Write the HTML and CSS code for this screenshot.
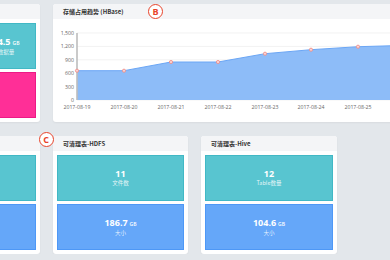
FILE: index.html
```html
<!DOCTYPE html>
<html lang="zh">
<head>
<meta charset="utf-8">
<title>存储概览</title>
<link rel="stylesheet" href="styles.css">
</head>
<body>
<div class="page">
  <div class="row top-row">
    <section class="card side-card">
      <header class="card-head"></header>
      <div class="card-body">
        <div class="tile teal"><div class="num">34.5<span class="unit">GB</span></div><div class="lbl">数据量</div></div>
        <div class="tile pink"></div>
      </div>
    </section>
    <section class="card chart-card">
      <header class="card-head">存储占用趋势 (HBase)</header>
      <div class="chart">
        <svg width="520" height="103" viewBox="0 0 520 103">
          <g class="grid">
            <line x1="24" y1="14" x2="520" y2="14"/>
            <line x1="24" y1="27.4" x2="520" y2="27.4"/>
            <line x1="24" y1="40.8" x2="520" y2="40.8"/>
            <line x1="24" y1="54.2" x2="520" y2="54.2"/>
            <line x1="24" y1="67.6" x2="520" y2="67.6"/>
            <line x1="24" y1="81" x2="520" y2="81"/>
          </g>
          <polygon class="area" points="24,51.7 71,51.7 118,43 165,43 212,34.7 258,30.7 305,27.7 352,26.4 399,25.6 446,24.8 493,24 493,81 24,81"/>
          <polyline class="line" points="24,51.7 71,51.7 118,43 165,43 212,34.7 258,30.7 305,27.7 352,26.4 399,25.6 446,24.8 493,24"/>
          <line class="axis" x1="24" y1="14" x2="24" y2="81"/>
          <g class="dots">
            <circle cx="24" cy="51.7" r="1.6"/>
            <circle cx="71" cy="51.7" r="1.6"/>
            <circle cx="118" cy="43" r="1.6"/>
            <circle cx="165" cy="43" r="1.6"/>
            <circle cx="212" cy="34.7" r="1.6"/>
            <circle cx="258" cy="30.7" r="1.6"/>
            <circle cx="305" cy="27.7" r="1.6"/>
            <circle cx="352" cy="26.4" r="1.6"/>
            <circle cx="399" cy="25.6" r="1.6"/>
          </g>
          <g class="ylab">
            <text x="21" y="16">1,500</text>
            <text x="21" y="29.4">1,200</text>
            <text x="21" y="42.8">900</text>
            <text x="21" y="56.2">600</text>
            <text x="21" y="69.6">300</text>
            <text x="21" y="83">0</text>
          </g>
          <g class="xlab">
            <text x="24" y="89.5">2017-08-19</text>
            <text x="71" y="89.5">2017-08-20</text>
            <text x="118" y="89.5">2017-08-21</text>
            <text x="165" y="89.5">2017-08-22</text>
            <text x="212" y="89.5">2017-08-23</text>
            <text x="258" y="89.5">2017-08-24</text>
            <text x="305" y="89.5">2017-08-25</text>
          </g>
        </svg>
      </div>
      <span class="marker marker-b">B</span>
    </section>
  </div>
  <div class="row bottom-row">
    <section class="card side-card">
      <header class="card-head"></header>
      <div class="card-body">
        <div class="tile teal"></div>
        <div class="tile blue"></div>
      </div>
    </section>
    <section class="card small-card">
      <header class="card-head">可清理表-HDFS</header>
      <div class="card-body">
        <div class="tile teal"><div class="num">11</div><div class="lbl">文件数</div></div>
        <div class="tile blue"><div class="num">186.7<span class="unit">GB</span></div><div class="lbl">大小</div></div>
      </div>
      <span class="marker marker-c">C</span>
    </section>
    <section class="card small-card wide">
      <header class="card-head">可清理表-Hive</header>
      <div class="card-body">
        <div class="tile teal"><div class="num">12</div><div class="lbl">Table数量</div></div>
        <div class="tile blue"><div class="num">104.6<span class="unit">GB</span></div><div class="lbl">大小</div></div>
      </div>
    </section>
  </div>
</div>
</body>
</html>
```

FILE: styles.css
```css
html, body {
  margin: 0;
  padding: 0;
  overflow: hidden;
  background: #e3e7eb;
  font-family: "Open Sans", "Noto Sans CJK SC", sans-serif;
}

.page {
  display: flex;
  flex-direction: column;
  gap: 14px;
  padding-top: 4px;
  margin-left: -28px;
  width: 700px;
}

.row {
  display: flex;
  gap: 13px;
  align-items: flex-start;
}

.card {
  position: relative;
  background: #ffffff;
  border-radius: 3px;
  box-shadow: 0 1px 2px rgba(0, 0, 0, 0.05);
  height: 118px;
  display: flex;
  flex-direction: column;
  flex: 0 0 auto;
}

.side-card { width: 68px; }
.small-card { width: 135px; }
.small-card.wide { width: 136px; }
.chart-card { width: 520px; }

.card-head {
  height: 15px;
  line-height: 15px;
  padding: 0 10px;
  background: #f4f5f7;
  border-radius: 3px 3px 0 0;
  font-family: "Noto Sans CJK SC", "Open Sans", sans-serif;
  font-size: 6px;
  font-weight: 600;
  color: #333;
  white-space: nowrap;
}

.card-body {
  flex: 1;
  padding: 4px;
  display: flex;
  flex-direction: column;
  gap: 3px;
}

.tile {
  flex: 1;
  box-sizing: border-box;
  display: flex;
  flex-direction: column;
  align-items: center;
  justify-content: center;
  color: #fff;
}

.teal { background: #58c5d0; border: 1px solid #41b8c5; }
.blue { background: #65a7f9; border: 1px solid #4e98f6; }
.pink { background: #ff2f97; border: 1px solid #ec1a86; }

.num {
  font-family: "Open Sans", sans-serif;
  font-size: 9px;
  font-weight: 700;
  line-height: 10px;
}

.unit {
  font-size: 5px;
  font-weight: 600;
  margin-left: 2px;
}

.lbl {
  font-family: "Noto Sans CJK SC", "Open Sans", sans-serif;
  font-size: 5.5px;
  line-height: 8px;
  color: rgba(255, 255, 255, 0.85);
}

.chart {
  flex: 1;
}

.chart svg { display: block; }

.grid line { stroke: #ececec; stroke-width: 0.7; }
.area { fill: #8dbcf8; }
.line { fill: none; stroke: #6ba6f5; stroke-width: 1; }
.axis { stroke: #bdbdbd; stroke-width: 1.6; }
.dots circle { fill: #fbd3d3; stroke: #ee8a84; stroke-width: 0.8; }

.ylab text, .xlab text {
  font-family: "Open Sans", sans-serif;
  font-size: 5.2px;
  fill: #666;
}
.ylab text { text-anchor: end; }
.xlab text { text-anchor: middle; }

.marker {
  position: absolute;
  width: 13px;
  height: 13px;
  border: 1.3px solid #e8432a;
  border-radius: 50%;
  background: #fff;
  color: #e8432a;
  font-family: "Open Sans", sans-serif;
  font-weight: 700;
  font-size: 9px;
  line-height: 13px;
  text-align: center;
}

.marker-b { left: 95px; top: -0.5px; }
.marker-c { left: -14.5px; top: -4.5px; }
```
